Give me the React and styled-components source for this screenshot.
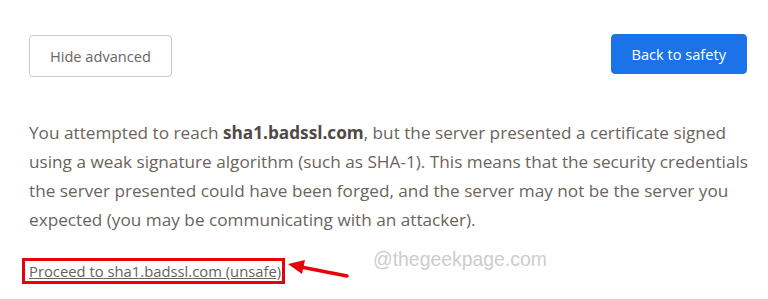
import styled, { createGlobalStyle } from 'styled-components';

const Global = createGlobalStyle`
  html, body {
    margin: 0;
    padding: 0;
    background: #fff;
  }
  body {
    font-family: "Open Sans", "Noto Sans", sans-serif;
  }
`;

const Page = styled.div`
  position: relative;
  width: 768px;
  height: 299px;
  box-sizing: border-box;
  padding: 34px 21px 0 29px;
  overflow: hidden;
`;

const ButtonRow = styled.div`
  display: flex;
  justify-content: space-between;
  align-items: flex-start;
`;

const Button = styled.button`
  box-sizing: border-box;
  height: ${(p) => (p.$primary ? '40px' : '42px')};
  margin-top: ${(p) => (p.$primary ? '0' : '1px')};
  padding: 0 20px;
  border-radius: 4px;
  border: 1px solid ${(p) => (p.$primary ? '#1a73e8' : '#c6c9cd')};
  background: ${(p) => (p.$primary ? '#1a73e8' : '#fff')};
  color: ${(p) => (p.$primary ? '#fff' : '#6b6660')};
  font-family: "Open Sans", "Noto Sans", sans-serif;
  font-size: 14.6px;
  cursor: pointer;
`;

const Text = styled.p`
  margin: 41px 0 0;
  font-size: 17.2px;
  line-height: 29px;
  color: #6b645c;
  white-space: nowrap;

  strong {
    color: #4e4a45;
    font-weight: 700;
  }
`;

const LinkRow = styled.div`
  position: relative;
  margin: 28px 0 0 -3px;
  display: flex;
  align-items: center;
`;

const ProceedLink = styled.a`
  font-size: 14.8px;
  line-height: 18px;
  padding-left: 3px;
  color: #66625e;
  text-decoration: underline;
  outline: 3px solid #e8000b;
  outline-offset: 1px;
`;

const Arrow = styled.svg`
  position: absolute;
  left: 261px;
  top: -2px;
`;

const Watermark = styled.span`
  position: absolute;
  left: 347px;
  top: -14px;
  font-family: "Liberation Sans", Arial, sans-serif;
  font-size: 19.4px;
  color: #cdcdcd;
`;

export default function App() {
  return (
    <>
      <Global />
      <Page>
        <ButtonRow>
          <Button>Hide advanced</Button>
          <Button $primary>Back to safety</Button>
        </ButtonRow>
        <Text>
          You attempted to reach <strong>sha1.badssl.com</strong>, but the server presented a certificate signed
          <br />
          using a weak signature algorithm (such as SHA-1). This means that the security credentials
          <br />
          the server presented could have been forged, and the server may not be the server you
          <br />
          expected (you may be communicating with an attacker).
        </Text>
        <LinkRow>
          <ProceedLink href="#">Proceed to sha1.badssl.com (unsafe)</ProceedLink>
          <Arrow width="64" height="20" viewBox="0 0 64 20">
            <line x1="60" y1="16" x2="14" y2="7" stroke="#e8000b" strokeWidth="3.5" strokeLinecap="round" />
            <polygon points="1,4 18,0 15,14" fill="#e8000b" />
          </Arrow>
          <Watermark>@thegeekpage.com</Watermark>
        </LinkRow>
      </Page>
    </>
  );
}
